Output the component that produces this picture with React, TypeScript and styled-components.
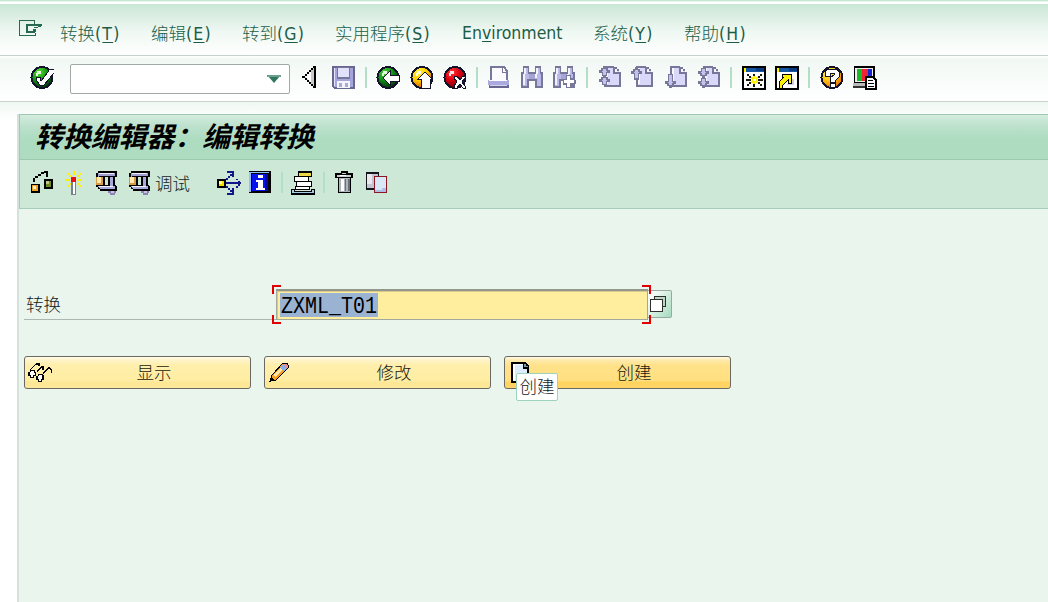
import type { ReactNode } from 'react';
import styled, { createGlobalStyle } from 'styled-components';

const GlobalStyle = createGlobalStyle`
  * {
    box-sizing: border-box;
  }

  body {
    margin: 0;
    overflow: hidden;
    font-family: 'Noto Sans', 'Noto Sans CJK SC', sans-serif;
  }
`;

const Window = styled.div`
  width: 1048px;
  height: 602px;
  display: flex;
  flex-direction: column;
  background: #ffffff;
`;

const TitleStrip = styled.div`
  height: 4px;
  background: #e8f7ee;
  border-top: 1px solid #c4e8d3;
  border-bottom: 2px solid #ffffff;
`;

const MenuBar = styled.nav`
  height: 52px;
  flex: none;
  display: flex;
  align-items: flex-start;
  padding: 14px 0 0 19px;
  border-bottom: 1px solid #c8d3cd;
  background: linear-gradient(#c9e8d6 0, #d6ebde 8px, #eff8f3 28px, #ffffff 51px);
`;

const MenuItem = styled.span<{ $width: number }>`
  width: ${({ $width }) => $width}px;
  height: 30px;
  line-height: 30px;
  flex: none;
  white-space: nowrap;
  color: #205f49;
  font-family: 'DejaVu Sans Condensed', 'DejaVu Sans', 'Noto Sans CJK SC', sans-serif;
  font-stretch: condensed;
  font-size: 17.5px;
`;

const Chinese = styled.span`
  font-family: 'Noto Sans CJK SC', sans-serif;
  font-weight: 300;
  font-size: 17.5px;
`;

const Latin = styled.span<{ $spacing?: number }>`
  letter-spacing: ${({ $spacing }) => $spacing ?? 0}px;
  color: #1d5c47;

  u {
    text-underline-offset: 2px;
  }
`;

const MenuIcon = styled.div`
  width: 41px;
  padding-top: 2px;
`;

const SystemToolbar = styled.div`
  height: 46px;
  flex: none;
  display: flex;
  align-items: flex-start;
  padding: 10px 0 0 30px;
  border-bottom: 1px solid #c8d3cd;
  background: linear-gradient(#ffffff 0, #f1f8f4 3px, #ffffff 45px);
`;

const CommandField = styled.div`
  width: 220px;
  height: 30px;
  margin: -2px 0 0 16px;
  padding-right: 8px;
  display: flex;
  align-items: center;
  justify-content: flex-end;
  border: 1px solid #a1a9a5;
  border-radius: 2px;
  background: #ffffff;
`;

const IconBox = styled.div<{ $gap?: number }>`
  width: 24px;
  height: 24px;
  flex: none;
  margin-left: ${({ $gap }) => $gap ?? 9}px;

  svg {
    display: block;
  }
`;

const Separator = styled.div<{ $gap?: number }>`
  width: 2px;
  height: 21px;
  flex: none;
  margin: 1px 0 0 ${({ $gap }) => $gap ?? 9}px;
  background: #b2dfc6;
`;

const Workspace = styled.div`
  flex: 1;
  display: flex;
  flex-direction: column;
  padding: 12px 0 0 17px;
  background: linear-gradient(#f0f8f3 0, #ffffff 20px);
`;

const Screen = styled.main`
  flex: 1;
  border-left: 2px solid #d3e2db;
  background: #eaf5ed;
`;

const ScreenTitle = styled.h1`
  height: 46px;
  margin: 0;
  padding-left: 15px;
  border: 1px solid #9fc9b3;
  border-right: 0;
  background: linear-gradient(#d4ecdf 0, #bde1cd 11px, #addcc1 24px, #addcc1 100%);
  color: #000000;
  font-family: 'Noto Sans CJK SC', sans-serif;
  font-size: 27.9px;
  font-style: italic;
  font-weight: 700;
  line-height: 41px;
  white-space: nowrap;
`;

const AppToolbar = styled.div`
  height: 49px;
  display: flex;
  align-items: flex-start;
  padding: 11px 0 0 10px;
  border: solid #a5cdb7;
  border-width: 0 0 1px 1px;
  background: #cee8d8;
`;

const ToolText = styled.span`
  width: 36px;
  margin-left: 3px;
  line-height: 24px;
  color: #14241c;
`;

const Form = styled.div`
  padding: 80px 0 0 5px;
`;

const FieldRow = styled.div`
  height: 32px;
  display: flex;
`;

const FieldLabel = styled.label`
  width: 252px;
  height: 31px;
  padding-left: 2px;
  border-bottom: 1px solid #aab8b1;
  line-height: 29px;
  color: #14201b;
`;

const FocusFrame = styled.div`
  position: relative;
  width: 372px;
  height: 32px;
`;

const Corner = styled.i<{ $top?: boolean; $left?: boolean }>`
  position: absolute;
  width: 9px;
  height: 9px;
  ${({ $top }) => ($top ? 'top: -4px; border-top: 2px solid #e10000;' : 'bottom: -3px; border-bottom: 2px solid #e10000;')}
  ${({ $left }) => ($left ? 'left: -4px; border-left: 2px solid #e10000;' : 'right: -3px; border-right: 2px solid #e10000;')}
`;

const TextField = styled.div`
  height: 31px;
  padding: 2px 3px;
  border: 1px solid #a3a89c;
  border-top: 2px solid #92968b;
  background: #feee9e;
  box-shadow: inset 1px 1px 0 #d8ca8d;
`;

const Selection = styled.span`
  display: block;
  width: 98px;
  height: 24px;
  padding-left: 1px;
  background: #9ab3d2;
`;

const FieldValue = styled.span`
  display: block;
  transform: scaleX(0.833);
  transform-origin: left;
  color: #000000;
  font-family: 'Liberation Mono', monospace;
  font-size: 24px;
  line-height: 27px;
`;

const MatchButton = styled.button`
  width: 24px;
  height: 28px;
  margin-top: 1px;
  padding: 0 4px 0 0;
  display: flex;
  align-items: center;
  justify-content: center;
  border: 1px solid #96aa9f;
  border-left: 0;
  border-radius: 0 2px 2px 0;
  background: linear-gradient(125deg, #f4faf6 20%, #a5dabd);
`;

const ButtonRow = styled.div`
  display: flex;
  gap: 13px;
  margin-top: 35px;
`;

const ActionButton = styled.button<{ $hover?: boolean }>`
  position: relative;
  width: 227px;
  height: 33px;
  padding: 0 29px 0 3px;
  display: flex;
  align-items: center;
  border: 1px solid #6b6a62;
  border-radius: 3px;
  color: #1c180c;
  background: ${({ $hover }) =>
    $hover
      ? 'linear-gradient(#fffbe8 0, #fdeaae 3px, #ffe28a 8px, #ffdf7f 24px, #ffd35d 25px, #ffd568 31px)'
      : 'linear-gradient(#fffbe8 0, #fef4c9 3px, #ffefac 8px, #ffeda2 24px, #fde795 25px, #fee99b 31px)'};
`;

const ButtonText = styled(Chinese)`
  flex: 1;
  padding: 0 0 2px 35px;
  text-align: center;
`;

const Tooltip = styled.div`
  position: absolute;
  left: 11px;
  top: 16px;
  width: 42px;
  height: 28px;
  border: 1px solid #9dd3b8;
  border-radius: 2px;
  background: #ffffff;
  line-height: 24px;
  text-align: center;
  color: #1c1824;
`;

function Icon({ gap, children }: { gap?: number; children: ReactNode }) {
    return (
        <IconBox $gap={gap}>
            <svg width="24" height="24" viewBox="0 0 24 24" shapeRendering="crispEdges" fill="none">{children}</svg>
        </IconBox>
    )
}

function Ball({ light, color, dark }: { light: string; color: string; dark: string }) {
    const id = `ball-${color.slice(1)}`
    return (
        <>
            <defs>
                <radialGradient id={id} cx="35%" cy="25%" r="75%">
                    <stop offset="0" stopColor={light} />
                    <stop offset=".5" stopColor={color} />
                    <stop offset="1" stopColor={dark} />
                </radialGradient>
            </defs>
            <circle cx="12" cy="11.5" r="10.5" fill={`url(#${id})`} stroke="#14132c" strokeWidth="2" />
            <path d="M7 5h4v3H8v2H6V7h1z" fill="#fff" opacity=".85" />
        </>
    )
}

function PageSheet({ x = 0 }: { x?: number }) {
    return (
        <g transform={`translate(${x} 0)`}>
            <path d="M5 1h10l6 6v13H5z" fill="#d9d8f8" />
            <path d="M5 0h10v2H5zM5 0h2v21H5zM20 7h2v14h-2zM5 19h17v2H5z" fill="#77779a" />
            <path d="M14 1h2v7h-2zM16 6h6v2h-6zM16 1h2v2h-2zM18 3h2v2h-2z" fill="#77779a" />
            <path d="M7 2h2v16H7zM16 3h2v3h-2z" fill="#f7f7ff" />
        </g>
    )
}

function ArrowUp({ y }: { y: number }) {
    return (
        <g transform={`translate(0 ${y})`}>
            <path d="M4 0h3v2h2v2h2v3H8v3H3V7H0V4h2V2h2z" fill="#77779a" />
            <path d="M4 3h3v2h1v1H7v3H4V6H3V5h1z" fill="#c2c2ec" />
        </g>
    )
}

function ArrowDown({ y }: { y: number }) {
    return (
        <g transform={`translate(0 ${y})`}>
            <path d="M3 0h5v3h3v3H9v2H7v2H4V8H2V6H0V3h3z" fill="#77779a" />
            <path d="M4 1h3v3h1v1H7v2H4V5H3V4h1z" fill="#c2c2ec" />
        </g>
    )
}

// Collapsed clamp shown by both the check and the debug tools
function Clamp() {
    return (
        <>
            <path d="M3 0h19v5h-2V2H3v3H1V2h2zM20 15h2v5H5v-2H3v-2H1V5h2v10h17z" fill="#000" />
            <path d="M3 2h17v4H3z" fill="#a09fd2" />
            <path d="M4 2h15v1H4z" fill="#f0f0ff" />
            <path d="M4 5h18v1H4zM3 14h18v1H3z" fill="#000" />
            <path d="M3 15h17v3H5z" fill="#aaa9dc" />
            <path d="M4 15h14v1H4z" fill="#f0f0ff" />
            <path d="M1 6h7v8H1z" fill="#d69b45" />
            <path d="M2 6h4v6H2z" fill="#ffe7ad" />
            <path d="M8 6h2v8H8zM13 6h2v8h-2zM18 6h2v8h-2z" fill="#000" />
            <path d="M15 6h3v9h-3z" fill="#aaa9dc" />
            <path d="M13 20h8v2h-1v2h-5v-2h-2z" fill="#8f83b4" />
            <path d="M16 20h3v2h-3z" fill="#c9c2df" />
        </>
    )
}

function Binoculars() {
    return (
        <>
            <path d="M3 0h6v6h6V0h6v6h2v16h-8v-7H9v7H1V6h2z" fill="#77779a" />
            <path d="M4 2h4v6h1v5H7v7H3V8h1zM16 2h4v6h1v12h-4v-7h-2V8h1z" fill="#b9b9ea" />
            <path d="M4 2h2v6H5v11H3V8h1zM16 2h2v6h-1v4h-2V8h1z" fill="#f1f1ff" />
            <path d="M9 8h6v5H9z" fill="#a5a5d5" />
        </>
    )
}

function WindowFrame() {
    return (
        <>
            <path d="M1 1h22v22H1z" fill="#fff" stroke="#000" strokeWidth="2" />
            <path d="M2 2h20v4H2z" fill="#1556a3" />
            <path d="M14 2h8v3h-8z" fill="#073a83" />
            <path d="M2 2h2v4H2z" fill="#fff200" />
        </>
    )
}

function Menu({ width, label, letter }: { width: number; label: string; letter: string }) {
    return (
        <MenuItem $width={width}>
            <Chinese>{label}</Chinese>
            <Latin $spacing={1.2}>(<u>{letter}</u>)</Latin>
        </MenuItem>
    )
}

function App() {
    return (
        <Window>
            <GlobalStyle />
            <TitleStrip />
            <MenuBar>
                <MenuIcon>
                    <svg width="23" height="17" viewBox="0 0 23 17" shapeRendering="crispEdges" fill="none">
                        <path d="M0 0h16v1H1v14h15v-2h1v3H0zM15 1h1v3h-1z" fill="#276852" />
                        <path d="M7 4h16v1l-2 2h-2l-2 2v2l-2 2H7z" fill="#276852" />
                        <path d="M9 6h10v1h-4v1h3v1h-4v2H9z" fill="#eaf6ef" />
                    </svg>
                </MenuIcon>
                <Menu width={91} label="转换" letter="T" />
                <Menu width={91} label="编辑" letter="E" />
                <Menu width={93} label="转到" letter="G" />
                <Menu width={127} label="实用程序" letter="S" />
                <MenuItem $width={131}><Latin>En<u>v</u>ironment</Latin></MenuItem>
                <Menu width={91} label="系统" letter="Y" />
                <Menu width={91} label="帮助" letter="H" />
            </MenuBar>

            <SystemToolbar>
                <Icon gap={0}>
                    <Ball light="#5ae62f" color="#159615" dark="#05380e" />
                    <path d="M6 11h4v3h2L20 3h4v4L14 19h-4l-4-5z" fill="#fff" stroke="#14132c" />
                </Icon>
                <CommandField>
                    <svg width="14" height="8" viewBox="0 0 14 8"><path d="M1 1h12L7 8z" fill="#2f765f" /><path d="M0 0h14v2H0z" fill="#6ba08e" /></svg>
                </CommandField>
                <Icon gap={12}>
                    <path d="M13 1v20L2 11z" fill="#c9c9c9" />
                    <path d="M9 4v13L3 11z" fill="#fff" />
                    <path d="M11 0h3v22h-3v-2h1V2h-1zM9 2h2v2H9zM7 4h2v2H7zM5 6h2v2H5zM3 8h2v2H3zM0 10h3v2H0zM3 12h2v2H3zM5 14h2v2H5zM7 16h2v2H7zM9 18h2v2H9z" fill="#000" />
                </Icon>
                <Icon gap={6}>
                    <path d="M0 0h23v23H2l-2-2z" fill="#666690" />
                    <path d="M2 2h19v19H2z" fill="#a5a5db" />
                    <path d="M5 1h13v12H5z" fill="#77779a" />
                    <path d="M6 2h11v9H6z" fill="#e1e1fc" />
                    <path d="M2 2h1v18H2z" fill="#e5e5ff" />
                    <path d="M5 15h13v7H5z" fill="#f4f4ff" />
                    <path d="M7 17h3v4H7zM13 17h3v4h-3z" fill="#aaaad5" />
                </Icon>
                <Separator />
                <Icon>
                    <Ball light="#50d335" color="#119018" dark="#083210" />
                    <path d="M7 12l7-7v4h9v6h-9v4z" fill="#fff" stroke="#14132c" />
                </Icon>
                <Icon gap={10}>
                    <Ball light="#fff43b" color="#ffd000" dark="#d75e00" />
                    <path d="M8 13l7-7 7 7h-2v9h-9v-9z" fill="#fff" stroke="#14132c" />
                </Icon>
                <Icon>
                    <Ball light="#ff3b3b" color="#dc0010" dark="#720010" />
                    <path d="M11 10h3l3 4 3-4h2v2l-3 4 3 4v2h-2l-3-4-3 4h-3v-2l3-4-3-4z" fill="#fff" stroke="#14132c" />
                </Icon>
                <Separator $gap={9} />
                <Icon gap={9}>
                    <path d="M4 14V1h13l3 4v9" fill="#fafaff" stroke="#77779a" strokeWidth="2" />
                    <path d="M15 1v5h5" stroke="#77779a" />
                    <path d="M1 14h21v5H1z" fill="#aaaadf" />
                    <path d="M2 14h18v1H2z" fill="#fff" />
                    <path d="M2 19h20v3H2z" fill="#66668e" /><path d="M3 19h17v1H3z" fill="#d3d3f6" />
                </Icon>
                <Icon><Binoculars /></Icon>
                <Icon gap={8}>
                    <Binoculars />
                    <path d="M14 9h5v3h3v2h2v4h-2v2h-3v2h-5v-3h-3v-6h3z" fill="#77779a" />
                    <path d="M15 10h3v4h4v3h-4v4h-3v-4h-3v-3h3z" fill="#fff" />
                </Icon>
                <Separator $gap={10} />
                <Icon gap={11}><PageSheet /><ArrowUp y={0} /><ArrowUp y={9} /></Icon>
                <Icon gap={8}><PageSheet /><ArrowUp y={1} /><path d="M3 8h5v6H3z" fill="#77779a" /><path d="M4 7h3v5H4z" fill="#c2c2ec" /></Icon>
                <Icon gap={10}><PageSheet /><ArrowDown y={12} /><path d="M3 8h5v5H3z" fill="#77779a" /><path d="M4 9h3v6H4z" fill="#c2c2ec" /></Icon>
                <Icon><PageSheet /><ArrowDown y={2} /><ArrowDown y={12} /></Icon>
                <Separator $gap={8} />
                <Icon gap={10}>
                    <WindowFrame />
                    <path d="M11 8h2v4h-2zM11 17h2v4h-2zM4 13h5v2H4zM16 13h5v2h-5zM5 8h2v2H5zM7 10h2v2H7zM18 8h2v2h-2zM16 10h2v2h-2zM5 18h2v2H5zM7 16h2v2H7zM18 18h2v2h-2zM16 16h2v2h-2z" fill="#17170a" />
                    <path d="M10 12h5v4h-5zM9 11h2v2H9zM14 11h2v2h-2zM9 15h2v2H9zM14 15h2v2h-2zM11 10h2v8h-2z" fill="#fff200" />
                    <path d="M11 13h3v2h-3z" fill="#fff" />
                </Icon>
                <Icon>
                    <WindowFrame />
                    <path d="M15 13h4v6h-7z" fill="#cfcfdc" />
                    <path d="M7 8h9v9h-3v-3l-6 6v2H4v-6l5-5H7z" fill="#fff200" stroke="#000" />
                </Icon>
                <Separator $gap={9} />
                <Icon gap={10}>
                    <Ball light="#fff34a" color="#ffc915" dark="#e77200" />
                    <path d="M5 9V6l3-3h8l3 3v5l-4 4v1h-5v-4l4-3V7h-4v3H5z" fill="#fff" stroke="#14132c" />
                    <path d="M10 17h5v4h-5z" fill="#fff" stroke="#14132c" />
                </Icon>
                <Icon>
                    <path d="M1 0h21v17H1z" fill="#000" /><path d="M2 2h18v14H2z" fill="#eee" />
                    <path d="M4 3h5v12H4z" fill="#18bb25" /><path d="M9 3h6v12H9z" fill="#ee2434" /><path d="M15 3h4v9h-4z" fill="#1523d2" />
                    <path d="M0 17h15v4H0z" fill="#bbb" /><path d="M0 20h14v2H0z" fill="#333" />
                    <path d="M13 11h7l3 3v9H13z" fill="#fff" stroke="#000" strokeWidth="2" />
                    <path d="M15 14h5v1h-5zM15 17h6v1h-6zM15 20h6v1h-6z" fill="#000" />
                </Icon>
            </SystemToolbar>

            <Workspace>
                <Screen>
                    <ScreenTitle>转换编辑器：编辑转换</ScreenTitle>
                    <AppToolbar>
                        <Icon gap={0}>
                            <path d="M3 7h2v4H3zM5 5h3v2H5zM8 3h3v2H8zM11 1h3v2h-3zM14 0h4v6h-2V2h-2z" fill="#000" />
                            <path d="M1 13h9v9H1zM14 8h9v10h-9z" fill="#000" />
                            <path d="M2 14h6v6H2z" fill="#efa52c" /><path d="M3 15h3v3H3z" fill="#fff0c7" />
                            <path d="M16 10h5v6h-5z" fill="#708b24" /><path d="M16 10h3v3h-3z" fill="#b9c981" />
                        </Icon>
                        <Icon gap={11}>
                            <path d="M8 0h2v4H8zM2 2h2v2H2zM4 4h2v2H4zM14 2h2v2h-2zM12 4h2v2h-2zM0 8h5v2H0zM12 8h5v2h-5zM4 12h2v2H4zM2 14h2v2H2zM12 12h2v2h-2zM14 14h2v2h-2z" fill="#fff000" />
                            <path d="M6 11h5v13H6z" fill="#777f91" /><path d="M8 11h2v12H8z" fill="#fff" /><path d="M6 6h5v5H6z" fill="#ed1010" />
                        </Icon>
                        <Icon gap={6}><Clamp /></Icon>
                        <Icon><Clamp /></Icon>
                        <ToolText><Chinese>调试</Chinese></ToolText>
                        <Icon gap={26}>
                            <path d="M9 7h2v2H9zM11 5h2v2h-2zM13 3h2v2h-2zM10 0h7v6h-2V2h-5zM9 11h14v2H9zM19 8h2v2h2v1h1v2h-1v2h-2v2h-2v-2h2V9h-2zM9 15h2v2H9zM11 17h2v2h-2zM13 19h2v2h-2zM15 17h2v7h-7v-2h5z" fill="#101789" />
                            <path d="M0 8h9v9H0z" fill="#000" /><path d="M2 10h5v5H2z" fill="#f8de00" /><path d="M2 10h3v3H2z" fill="#ffff9e" />
                        </Icon>
                        <Icon gap={8}>
                            <path d="M0 0h22v22H0z" fill="#000" /><path d="M0 1h2v20H0zM2 1h18v1H2z" fill="#8cc4ff" />
                            <path d="M3 3h16v17H3z" fill="#0714ed" /><path d="M16 3h3v17h-3z" fill="#0707a5" />
                            <path d="M9 4h5v3H9zM7 9h7v8h2v2H7v-2h2v-6H7z" fill="#fff" />
                        </Icon>
                        <Separator $gap={8} />
                        <Icon gap={8}>
                            <path d="M7 0h14v6H7zM3 5h15v6H3zM5 10h16v6H5zM4 15h15v4H4z" fill="#000" />
                            <path d="M8 2h12v3H8z" fill="#efd943" />
                            <path d="M4 6h13v4H4zM6 11h14v4H6zM5 16h13v2H5z" fill="#fff" />
                            <path d="M0 18h4v2h16v-2h4v6H0z" fill="#000" /><path d="M1 19h2v2h18v-2h2v3H1z" fill="#a5cbe8" />
                        </Icon>
                        <Separator $gap={8} />
                        <Icon gap={9}>
                            <path d="M7 0h7v2h5v5h-2v15H4V7H1V2h6z" transform="translate(0 0)" fill="#000" />
                            <path d="M8 2h4v1H8zM3 4h14v2H3z" fill="#c8cdcf" />
                            <path d="M5 7h11v14H5z" fill="#aeb5bb" />
                            <path d="M6 4h6v1H6zM7 8h3v12H7z" fill="#fff" /><path d="M11 8h1v12h-1zM14 8h2v12h-2z" fill="#68717a" />
                        </Icon>
                        <Icon gap={7}>
                            <path d="M1 1h13v18H1z" fill="#15151d" /><path d="M2 3h11v14H2z" fill="#c5c6d3" /><path d="M2 3h5v10H2z" fill="#e9e9ed" />
                            <path d="M9 5h13v17H9z" fill="#8d1723" /><path d="M10 6h11v15H10z" fill="#d8e8f7" /><path d="M17 17h4v4h-4zM10 19h8v2h-8z" fill="#aebfe3" />
                        </Icon>
                    </AppToolbar>

                    <Form>
                        <FieldRow>
                            <FieldLabel><Chinese>转换</Chinese></FieldLabel>
                            <FocusFrame>
                                <TextField><Selection><FieldValue>ZXML_T01</FieldValue></Selection></TextField>
                                <Corner $top $left />
                                <Corner $top />
                                <Corner $left />
                                <Corner />
                            </FocusFrame>
                            <MatchButton>
                                <svg width="18" height="18" viewBox="0 0 18 18" fill="none" shapeRendering="crispEdges">
                                    <path d="M5 1h12v11H5z" fill="#302d2b" /><path d="M6 2h10v9H6z" fill="#bcd6c7" />
                                    <path d="M1 4h13v13H1z" fill="#302d2b" /><path d="M2 5h11v11H2z" fill="#fff" />
                                </svg>
                            </MatchButton>
                        </FieldRow>
                        <ButtonRow>
                            <ActionButton>
                                <svg width="24" height="20" viewBox="0 0 24 20" fill="none" shapeRendering="crispEdges">
                                    <path d="M2 7l6-6h3v2M9 9l4-5h2v3M15 11l5-6h2l2 3v2" stroke="#000" strokeWidth="1.3" />
                                    <path d="M2 7h5v2h1v4H6v2H2v-2H0V9h2zM10 11h5v1h1v5h-2v2h-4v-2H8v-4h2z" fill="#000" />
                                    <path d="M3 8h3v2h1v2H5v2H3v-2H2v-3h1zM11 12h3v4h-1v2h-2v-2h-1v-3h1z" fill="#fff" />
                                </svg>
                                <ButtonText>显示</ButtonText>
                            </ActionButton>
                            <ActionButton>
                                <svg width="24" height="22" viewBox="0 0 24 22" fill="none" shapeRendering="crispEdges">
                                    <path d="M2 19l2-6L15 1h4l1 2v3L8 18z" fill="#f3a024" stroke="#000" />
                                    <path d="M5 13L15 3l2 2L7 15z" fill="#ffe7aa" />
                                    <path d="M12 5l3-3 4 4-3 4z" fill="#8daee0" />
                                    <path d="M16 2h3l1 3-2 1z" fill="#ee8d92" />
                                    <path d="M1 20l2-5 4 3z" fill="#000" />
                                </svg>
                                <ButtonText>修改</ButtonText>
                            </ActionButton>
                            <ActionButton $hover>
                                <svg width="24" height="22" viewBox="0 0 24 22" fill="none" shapeRendering="crispEdges">
                                    <path d="M3 0h14l4 4v17H3z" fill="#000" />
                                    <path d="M5 2h10v5h4v12H5z" fill="#dcecfb" />
                                    <path d="M16 2h2v2h2v1h-4z" fill="#7899aa" />
                                    <path d="M5 2h2v17H5zM7 2h8v1H7z" fill="#fff" />
                                </svg>
                                <ButtonText>创建</ButtonText>
                                <Tooltip><Chinese>创建</Chinese></Tooltip>
                            </ActionButton>
                        </ButtonRow>
                    </Form>
                </Screen>
            </Workspace>
        </Window>
    )
}

export default App;
